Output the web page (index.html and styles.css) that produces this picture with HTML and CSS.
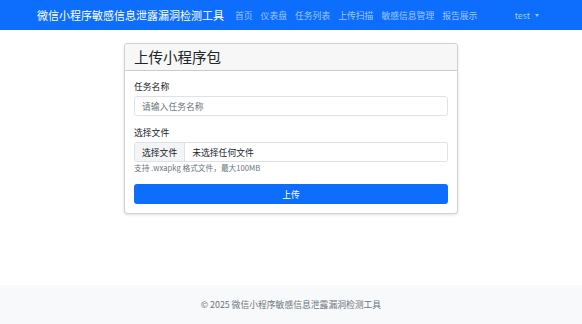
FILE: index.html
```html
<!DOCTYPE html>
<html lang="zh-CN">
<head>
<meta charset="utf-8">
<title>上传小程序包</title>
<link rel="stylesheet" href="styles.css">
</head>
<body>
<nav class="navbar">
  <div class="nav-inner">
    <a class="brand" href="#">微信小程序敏感信息泄露漏洞检测工具</a>
    <ul class="nav-links">
      <li><a href="#">首页</a></li>
      <li><a href="#">仪表盘</a></li>
      <li><a href="#">任务列表</a></li>
      <li><a href="#">上传扫描</a></li>
      <li><a href="#">敏感信息管理</a></li>
      <li><a href="#">报告展示</a></li>
    </ul>
    <a class="user" href="#">test<span class="caret"></span></a>
  </div>
</nav>
<main class="main">
  <div class="card">
    <div class="card-header"><h3 class="card-title">上传小程序包</h3></div>
    <div class="card-body">
      <div class="group">
        <label class="label">任务名称</label>
        <div class="input"><span class="placeholder">请输入任务名称</span></div>
      </div>
      <div class="group">
        <label class="label">选择文件</label>
        <div class="input file">
          <span class="file-btn">选择文件</span>
          <span class="file-name">未选择任何文件</span>
        </div>
        <div class="help">支持 .wxapkg 格式文件，最大100MB</div>
      </div>
      <button class="btn">上传</button>
    </div>
  </div>
</main>
<footer class="footer">© 2025 微信小程序敏感信息泄露漏洞检测工具</footer>
</body>
</html>
```
FILE: styles.css
```css
* { box-sizing: border-box; }
html, body { margin: 0; height: 100%; }
body {
  font-family: "Noto Sans CJK SC", "Noto Sans", sans-serif;
  color: #212529;
  background: #fff;
  display: flex;
  flex-direction: column;
  min-height: 100vh;
  font-size: 8.8px;
}
a { text-decoration: none; }
.navbar {
  background: #0d6efd;
  height: 30px;
  flex: none;
}
.nav-inner {
  height: 100%;
  margin: 0 37px;
  display: flex;
  align-items: center;
}
.brand {
  color: #fff;
  font-size: 11px;
  margin-right: 7px;
  white-space: nowrap;
}
.nav-links {
  list-style: none;
  margin: 0;
  padding: 0;
  display: flex;
}
.nav-links a {
  display: block;
  padding: 0 4px;
  color: rgba(255,255,255,.6);
  font-size: 8.8px;
  white-space: nowrap;
}
.user {
  margin-left: auto;
  margin-right: 6px;
  color: rgba(255,255,255,.6);
  font-size: 8.8px;
  display: flex;
  align-items: center;
}
.caret {
  display: inline-block;
  margin-left: 5px;
  border-top: 3px solid rgba(255,255,255,.6);
  border-left: 2.5px solid transparent;
  border-right: 2.5px solid transparent;
}
.main {
  flex: 1;
  display: flex;
  justify-content: center;
  align-items: flex-start;
  padding-top: 13px;
}
.card {
  width: 334px;
  border: 1px solid rgba(0,0,0,.175);
  border-radius: 4px;
  box-shadow: 0 1px 3px rgba(0,0,0,.12);
  background: #fff;
  overflow: hidden;
}
.card-header {
  background: #f7f7f7;
  border-bottom: 1px solid rgba(0,0,0,.175);
  height: 27px;
  padding: 0 9px;
  display: flex;
  align-items: center;
}
.card-title {
  margin: 0;
  font-size: 14.5px;
  font-weight: 400;
  line-height: 1.2;
}
.card-body { padding: 9px; }
.group { margin-bottom: 10px; }
.label {
  display: block;
  font-size: 8.8px;
  line-height: 13px;
  margin-bottom: 3px;
}
.input {
  height: 20px;
  border: 1px solid #dee2e6;
  border-radius: 3px;
  padding: 0 7px;
  display: flex;
  align-items: center;
  font-size: 8.8px;
}
.placeholder { color: #6c757d; }
.input.file { padding: 0; overflow: hidden; }
.file-btn {
  background: #f3f4f6;
  height: 100%;
  display: flex;
  align-items: center;
  padding: 0 7px;
  border-right: 1px solid #dee2e6;
}
.file-name { padding: 0 7px; }
.help {
  font-size: 7.7px;
  color: #6c757d;
  line-height: 12px;
}
.btn {
  display: block;
  width: 100%;
  height: 20px;
  border: 0;
  border-radius: 3px;
  background: #0d6efd;
  color: #fff;
  font-family: inherit;
  font-size: 8.8px;
  padding: 0;
}
.footer {
  flex: none;
  height: 39px;
  background: #f8f9fa;
  display: flex;
  align-items: center;
  justify-content: center;
  color: #6c757d;
  font-size: 8.8px;
}
```
